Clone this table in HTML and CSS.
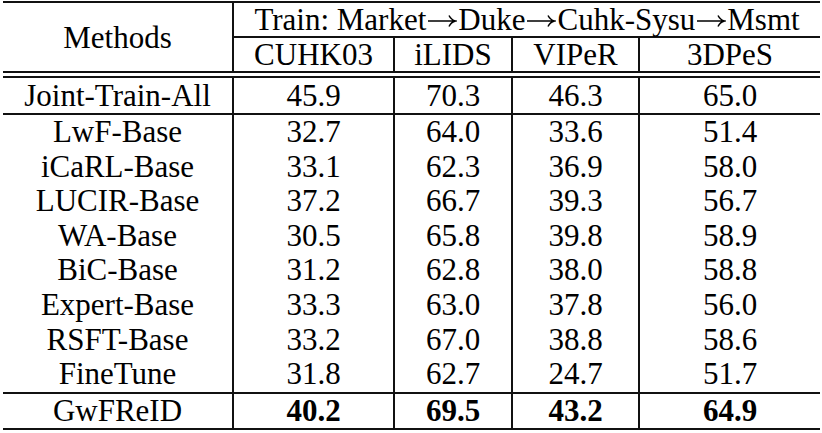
FILE: index.html
```html
<!DOCTYPE html>
<html lang="en">
<head>
<meta charset="UTF-8">
<title>Continual ReID Results</title>
<link rel="stylesheet" href="styles.css">
</head>
<body>
<table class="results">
    <colgroup>
        <col class="col-method">
        <col class="col-cuhk">
        <col class="col-ilids">
        <col class="col-viper">
        <col class="col-3dpes">
    </colgroup>
    <thead>
        <tr class="head-top">
            <th class="method head-last" rowspan="2">Methods</th>
            <th class="train" colspan="4">Train: Market<svg class="arrow" viewBox="0 0 30 16" aria-label="to"><path d="M1 8H28M22 2.5C23.5 5.5 25.5 7.2 28.5 8C25.5 8.8 23.5 10.5 22 13.5"/></svg>Duke<svg class="arrow" viewBox="0 0 30 16" aria-label="to"><path d="M1 8H28M22 2.5C23.5 5.5 25.5 7.2 28.5 8C25.5 8.8 23.5 10.5 22 13.5"/></svg>Cuhk-Sysu<svg class="arrow" viewBox="0 0 30 16" aria-label="to"><path d="M1 8H28M22 2.5C23.5 5.5 25.5 7.2 28.5 8C25.5 8.8 23.5 10.5 22 13.5"/></svg>Msmt</th>
        </tr>
        <tr class="head-sets">
            <th>CUHK03</th>
            <th>iLIDS</th>
            <th>VIPeR</th>
            <th>3DPeS</th>
        </tr>
    </thead>
    <tbody>
        <tr class="gap"><td colspan="5"></td></tr>
        <tr class="boxed">
            <td class="method">Joint-Train-All</td><td>45.9</td><td>70.3</td><td>46.3</td><td>65.0</td>
        </tr>
        <tr><td class="method">LwF-Base</td><td>32.7</td><td>64.0</td><td>33.6</td><td>51.4</td></tr>
        <tr><td class="method">iCaRL-Base</td><td>33.1</td><td>62.3</td><td>36.9</td><td>58.0</td></tr>
        <tr><td class="method">LUCIR-Base</td><td>37.2</td><td>66.7</td><td>39.3</td><td>56.7</td></tr>
        <tr><td class="method">WA-Base</td><td>30.5</td><td>65.8</td><td>39.8</td><td>58.9</td></tr>
        <tr><td class="method">BiC-Base</td><td>31.2</td><td>62.8</td><td>38.0</td><td>58.8</td></tr>
        <tr><td class="method">Expert-Base</td><td>33.3</td><td>63.0</td><td>37.8</td><td>56.0</td></tr>
        <tr><td class="method">RSFT-Base</td><td>33.2</td><td>67.0</td><td>38.8</td><td>58.6</td></tr>
        <tr><td class="method">FineTune</td><td>31.8</td><td>62.7</td><td>24.7</td><td>51.7</td></tr>
        <tr class="boxed ours">
            <td class="method">GwFReID</td><td>40.2</td><td>69.5</td><td>43.2</td><td>64.9</td>
        </tr>
    </tbody>
</table>
</body>
</html>
```

FILE: styles.css
```css
body {
    margin: 0;
    background-color: #fff;
    color: #000;
    font-family: "Liberation Serif", "Times New Roman", serif;
}
.results {
    border-collapse: separate;
    border-spacing: 0;
    table-layout: fixed;
    width: 817px;
    margin: 1px 0 0 3px;
    font-size: 31px;
}
.col-method { width: 229px; }
.col-cuhk { width: 161px; }
.col-ilids { width: 118px; }
.col-viper { width: 127px; }
.col-3dpes { width: 182px; }

.results th,
.results td {
    padding: 0;
    text-align: center;
    font-weight: normal;
    line-height: 34.6px;
    white-space: nowrap;
    border-left: 2px solid #111;
}
.results .method {
    border-left: none;
}

/* header rules */
.head-top th {
    border-top: 2px solid #111;
    line-height: 33px;
}
.head-top .train {
    border-bottom: 2px solid #111;
}
.head-sets th {
    line-height: 33px;
    border-bottom: 2px solid #111;
}
.head-top .head-last {
    border-bottom: 2px solid #111;
}

/* thin math-style arrow between training domains */
.arrow {
    width: 30px;
    height: 16px;
    margin: 0 1px;
    vertical-align: 1px;
    fill: none;
    stroke: #000;
    stroke-width: 1.5;
}

/* the gap of the double rule */
.gap td {
    height: 3px;
    line-height: 0;
    border-left: none;
}

.boxed td {
    border-top: 2px solid #111;
    border-bottom: 2px solid #111;
    line-height: 35px;
}
.ours td {
    line-height: 34px;
}
.ours td + td {
    font-weight: bold;
}
```
